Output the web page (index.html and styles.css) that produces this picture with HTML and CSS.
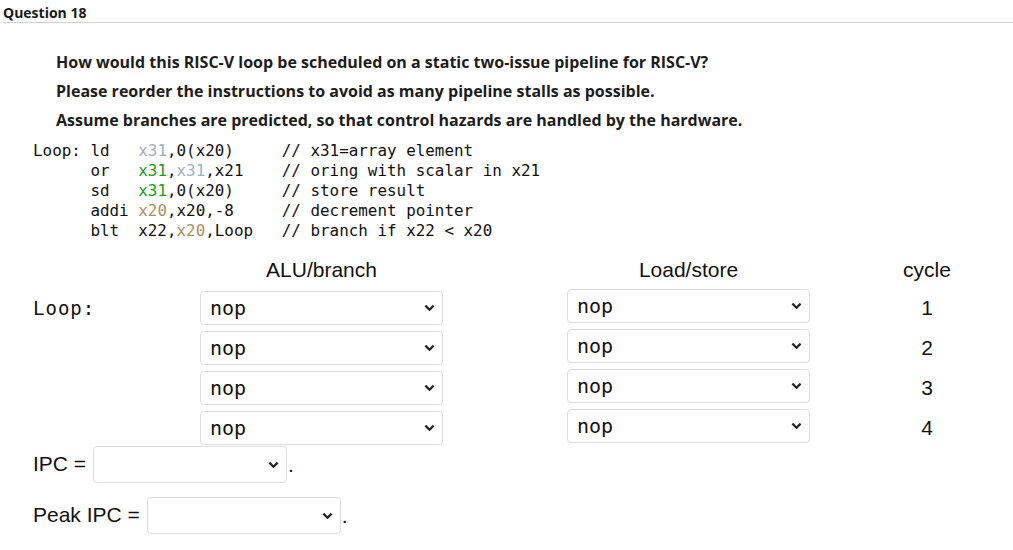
FILE: index.html
```html
<!DOCTYPE html>
<html>
<head>
<meta charset="utf-8">
<link rel="stylesheet" href="styles.css">
</head>
<body>
<div class="qhead"><span class="qtitle">Question 18</span></div>
<div class="prompt">
  <p>How would this RISC-V loop be scheduled on a static two-issue pipeline for RISC-V?</p>
  <p>Please reorder the instructions to avoid as many pipeline stalls as possible.</p>
  <p>Assume branches are predicted, so that control hazards are handled by the hardware.</p>
</div>
<pre class="code">Loop: ld   <span class="c-gray">x31</span>,0(x20)     // x31=array element
      or   <span class="c-green">x31</span>,<span class="c-gray">x31</span>,x21    // oring with scalar in x21
      sd   <span class="c-green">x31</span>,0(x20)     // store result
      addi <span class="c-brown">x20</span>,x20,-8     // decrement pointer
      blt  x22,<span class="c-brown">x20</span>,Loop   // branch if x22 &lt; x20</pre>
<div class="sched">
  <div class="h"></div>
  <div class="h">ALU/branch</div>
  <div class="h"></div>
  <div class="h">Load/store</div>
  <div class="h"></div>
  <div class="h">cycle</div>

  <div class="lbl">Loop:</div>
  <div class="cell"><select class="sel alu"><option>nop</option></select></div>
  <div></div>
  <div class="cell"><select class="sel"><option>nop</option></select></div>
  <div></div>
  <div class="cyc">1</div>

  <div class="lbl"></div>
  <div class="cell"><select class="sel alu"><option>nop</option></select></div>
  <div></div>
  <div class="cell"><select class="sel"><option>nop</option></select></div>
  <div></div>
  <div class="cyc">2</div>

  <div class="lbl"></div>
  <div class="cell"><select class="sel alu"><option>nop</option></select></div>
  <div></div>
  <div class="cell"><select class="sel"><option>nop</option></select></div>
  <div></div>
  <div class="cyc">3</div>

  <div class="lbl"></div>
  <div class="cell"><select class="sel alu"><option>nop</option></select></div>
  <div></div>
  <div class="cell"><select class="sel"><option>nop</option></select></div>
  <div></div>
  <div class="cyc">4</div>
</div>
<div class="ipc">
  <div class="ipc-row"><span>IPC =</span><select class="sel small"><option></option></select><span>.</span></div>
  <div class="ipc-row"><span>Peak IPC =</span><select class="sel small"><option></option></select><span>.</span></div>
</div>
</body>
</html>
```
FILE: styles.css
```css
html, body {
  margin: 0;
  padding: 0;
  background: #fff;
  color: #111;
}
.qhead {
  margin: 0 0 0 3px;
  border-bottom: 1px solid #cfcfcf;
  height: 23px;
  box-sizing: border-box;
}
.qtitle {
  font-family: "Open Sans", sans-serif;
  font-weight: 700;
  font-size: 14px;
  line-height: 22px;
  position: relative;
  top: 2px;
  color: #1a1a1a;
}
.prompt {
  margin: 25px 0 0 56px;
  font-family: "Open Sans", sans-serif;
  font-weight: 700;
  font-size: 16px;
  color: #1d1d1d;
}
.prompt p {
  margin: 0;
  line-height: 29px;
}
.code {
  margin: 6px 0 0 33px;
  font-family: "DejaVu Sans Mono", monospace;
  font-size: 15.9px;
  line-height: 20px;
  color: #111;
}
.c-gray { color: #9db0c2; }
.c-green { color: #18a018; }
.c-brown { color: #b28e5c; }
.sched {
  display: grid;
  grid-template-columns: 167px 243px 124px 243px 67px 100px;
  grid-template-rows: 27px repeat(4, 34px);
  row-gap: 6px;
  margin: 15px 0 0 33px;
  font-family: "Liberation Sans", Arial, sans-serif;
}
.h {
  font-size: 21px;
  text-align: center;
  line-height: 27px;
  color: #111;
}
.lbl {
  font-family: "DejaVu Sans Mono", monospace;
  font-size: 19px;
  line-height: 34px;
  letter-spacing: 1px;
  padding-top: 2px;
}
.cyc {
  font-size: 21px;
  text-align: center;
  line-height: 38px;
}
.sel {
  appearance: none;
  -webkit-appearance: none;
  display: block;
  width: 243px;
  height: 34px;
  box-sizing: border-box;
  border: 1px solid #dedede;
  border-radius: 4px;
  background: #fff url("data:image/svg+xml;utf8,<svg xmlns='http://www.w3.org/2000/svg' width='11' height='8' viewBox='0 0 11 8'><path d='M1.4 1.6 L5.5 5.7 L9.6 1.6' fill='none' stroke='%23222' stroke-width='2.2'/></svg>") no-repeat right 7px center;
  padding: 0 0 0 9px;
  font-family: "DejaVu Sans Mono", monospace;
  font-size: 20px;
  color: #111;
  margin: 0;
}
.sel.alu { margin-top: 2px; }
.ipc {
  margin: 3px 0 0 33px;
  font-family: "Liberation Sans", Arial, sans-serif;
  font-size: 21px;
  color: #111;
}
.ipc-row {
  display: flex;
  align-items: center;
  height: 37px;
  margin-bottom: 14px;
}
.ipc-row span:first-child {
  position: relative;
  top: -1px;
}
.sel.small {
  width: 194px;
  height: 37px;
  margin: 0 1px 0 7px;
}
```
